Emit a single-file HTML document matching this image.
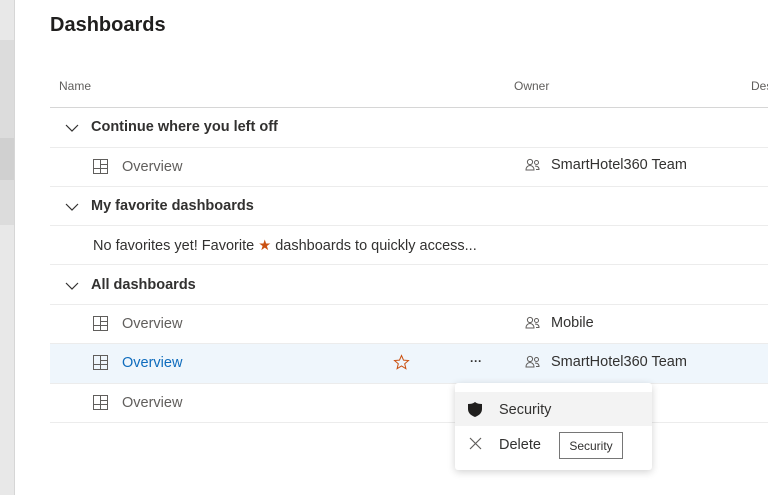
<html><head><style>
body{margin:0;width:768px;height:495px;overflow:hidden;background:#fff;font-family:"Segoe UI","Liberation Sans",sans-serif;color:#323130;position:relative}
.a{position:absolute}
.side{left:0;top:0;width:14px;height:495px;background:#e8e8e8;border-right:1px solid #d6d6d6}
.t{font-size:14.5px;white-space:nowrap}
.ln{left:50px;width:718px;height:1px;background:#ececec}
</style></head><body>
<div class="a side"></div>
<div class="a" style="left:0;top:40px;width:14px;height:185px;background:#dcdcdc"></div>
<div class="a" style="left:0;top:138px;width:14px;height:42px;background:#d0d0d0"></div>
<div class="a" style="left:50px;top:14px;font-size:20px;font-weight:600;color:#201f1e">Dashboards</div>
<div class="a" style="left:59px;top:79px;font-size:12px;color:#605e5c">Name</div>
<div class="a" style="left:514px;top:79px;font-size:12px;color:#605e5c">Owner</div>
<div class="a" style="left:751px;top:79px;font-size:12px;color:#605e5c">Des</div>
<div class="a ln" style="top:107px;background:#d6d6d6"></div>
<div class="a" style="left:50px;top:344px;width:718px;height:39px;background:#eff6fc"></div>
<div class="a ln" style="top:147px"></div><div class="a ln" style="top:186px"></div><div class="a ln" style="top:225px"></div><div class="a ln" style="top:264px"></div><div class="a ln" style="top:304px"></div><div class="a ln" style="top:343px"></div><div class="a ln" style="top:383px"></div><div class="a ln" style="top:422px"></div>
<svg class="a" style="left:65px;top:124px" width="14" height="8"><path d="M1 1l6 6 6-6" fill="none" stroke="#323130" stroke-width="1.2"/></svg>
<div class="a t" style="left:91px;top:119px;font-weight:600">Continue where you left off</div>
<svg class="a" style="left:65px;top:203px" width="14" height="8"><path d="M1 1l6 6 6-6" fill="none" stroke="#323130" stroke-width="1.2"/></svg>
<div class="a t" style="left:91px;top:198px;font-weight:600">My favorite dashboards</div>
<svg class="a" style="left:65px;top:282px" width="14" height="8"><path d="M1 1l6 6 6-6" fill="none" stroke="#323130" stroke-width="1.2"/></svg>
<div class="a t" style="left:91px;top:277px;font-weight:600">All dashboards</div>
<div class="a t" style="left:93px;top:238px">No favorites yet! Favorite <span style="color:#ca5010">★</span> dashboards to quickly access...</div>
<svg class="a" width="0" height="0"><defs><g id="g"><path d="M.5 .5h14v14h-14zM.5 9.5h14M7.5 .5v14M7.5 5.5h7" fill="none" stroke="currentColor"/></g></defs></svg>
<svg class="a" style="left:93px;top:159px;color:#605e5c" width="16" height="16"><use href="#g"/></svg>
<div class="a t" style="left:122px;top:159px;color:#605e5c">Overview</div>
<svg class="a" style="left:93px;top:316px;color:#605e5c" width="16" height="16"><use href="#g"/></svg>
<div class="a t" style="left:122px;top:316px;color:#605e5c">Overview</div>
<svg class="a" style="left:93px;top:355px;color:#605e5c" width="16" height="16"><use href="#g"/></svg>
<div class="a t" style="left:122px;top:355px;color:#0f6cbd">Overview</div>
<svg class="a" style="left:93px;top:395px;color:#605e5c" width="16" height="16"><use href="#g"/></svg>
<div class="a t" style="left:122px;top:395px;color:#605e5c">Overview</div>
<svg class="a" style="left:393px;top:354px" width="17" height="17"><path d="M8.5 1.5l2 4.6 5 .4-3.8 3.3 1.2 4.9-4.4-2.7-4.4 2.7 1.2-4.9L1.5 6.5l5-.4z" fill="none" stroke="#ca5010" stroke-width="1"/></svg>
<div class="a" style="left:470px;top:354px;font-size:12px;color:#323130;font-weight:bold">···</div>
<svg class="a" width="0" height="0"><defs><g id="p"><circle cx="5" cy="4" r="2.6" fill="none" stroke="#605e5c"/><path d="M1 12c0-3 2-4.5 4-4.5s4 1.5 4 4.5z" fill="none" stroke="#605e5c"/><circle cx="11.5" cy="4.5" r="2" fill="none" stroke="#605e5c"/><path d="M10 8c2 0 4 .5 4 3.5h-3" fill="none" stroke="#605e5c"/></g></defs></svg>
<svg class="a" style="left:525px;top:158px" width="15" height="13"><use href="#p"/></svg>
<div class="a t" style="left:551px;top:157px">SmartHotel360 Team</div>
<svg class="a" style="left:525px;top:316px" width="15" height="13"><use href="#p"/></svg>
<div class="a t" style="left:551px;top:315px">Mobile</div>
<svg class="a" style="left:525px;top:355px" width="15" height="13"><use href="#p"/></svg>
<div class="a t" style="left:551px;top:354px">SmartHotel360 Team</div>
<div class="a" style="left:455px;top:383px;width:197px;height:87px;background:#fff;border-radius:3px;box-shadow:0 2px 8px rgba(0,0,0,.18)"></div>
<div class="a" style="left:455px;top:392px;width:197px;height:34px;background:#f3f3f3"></div>
<svg class="a" style="left:468px;top:402px" width="14" height="15"><path d="M7 0C5 1.5 3 2 0 2v5c0 4 3 6.5 7 8 4-1.5 7-4 7-8V2c-3 0-5-.5-7-2z" fill="#201f1e"/></svg>
<div class="a t" style="left:499px;top:402px">Security</div>
<svg class="a" style="left:469px;top:437px" width="13" height="13"><path d="M1 1l11 11M12 1L1 12" stroke="#605e5c" stroke-width="1.2"/></svg>
<div class="a t" style="left:499px;top:437px">Delete</div>
<div class="a" style="left:559px;top:432px;width:62px;height:25px;border:1px solid #767676;background:#fff;font-size:12px;line-height:26px;text-align:center">Security</div>
</body></html>
